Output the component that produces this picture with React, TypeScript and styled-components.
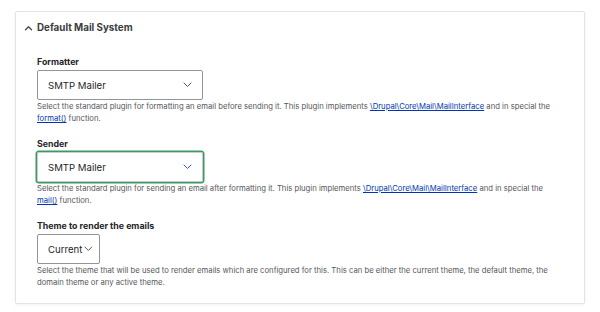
import React from 'react';
import styled, { createGlobalStyle } from 'styled-components';

const GlobalStyle = createGlobalStyle`
  html, body {
    margin: 0;
    padding: 0;
    background: #ffffff;
  }
  body {
    font-family: Inter, "Liberation Sans", Arial, sans-serif;
    color: #232429;
  }
`;

const Page = styled.div`
  padding: 11px 15px 10px 15px;
`;

const Card = styled.section`
  width: 570px;
  box-sizing: border-box;
  border: 1px solid #e3e4e8;
  border-radius: 2px;
  box-shadow: 0 1px 3px rgba(0, 0, 0, 0.06);
  background: #fff;
  padding-bottom: 14px;
`;

const Header = styled.div`
  display: flex;
  align-items: center;
  gap: 4px;
  padding: 9px 0 0 8px;
  height: 13px;
  font-size: 9.8px;
  font-weight: 700;
  color: #3b3c40;
  line-height: 13px;
`;

const Body = styled.div`
  padding: 22px 0 0 21px;
  display: flex;
  flex-direction: column;
`;

const Field = styled.div<{ $top?: number }>`
  display: flex;
  flex-direction: column;
  margin-top: ${p => p.$top ?? 0}px;
`;

const Label = styled.div`
  font-size: 8.8px;
  font-weight: 700;
  line-height: 12px;
  color: #232429;
  margin-bottom: 2px;
`;

const Select = styled.div<{ $width: number; $focused?: boolean; $tight?: boolean }>`
  box-sizing: border-box;
  width: ${p => p.$width}px;
  height: 30px;
  border: 1px solid ${p => (p.$focused ? '#c9cbd1' : '#92949b')};
  border-radius: 2px;
  display: flex;
  align-items: center;
  justify-content: ${p => (p.$tight ? 'flex-start' : 'space-between')};
  gap: 2px;
  padding: 0 ${p => (p.$tight ? 6 : 10)}px 0 10px;
  font-size: 9.6px;
  color: #232429;
  box-shadow: ${p => (p.$focused ? '0 0 0 1.5px #3d9a5f' : 'none')};
`;

const Description = styled.p`
  margin: 1px 0 0 0;
  font-size: 7.7px;
  line-height: 12px;
  color: #55565b;
  width: 525px;
`;

const Link = styled.a`
  color: #0036b1;
  text-decoration: underline;
`;

const Chevron = ({ color = '#55565b', up = false }: { color?: string; up?: boolean }) => (
  <svg width="9" height="6" viewBox="0 0 9 6" fill="none">
    <path
      d={up ? 'M1.5 4.8 L4.5 1.8 L7.5 4.8' : 'M1 1 L4.5 4.5 L8 1'}
      stroke={color}
      strokeWidth={up ? 1.3 : 1}
      strokeLinecap="round"
      strokeLinejoin="round"
    />
  </svg>
);

export default function App() {
  return (
    <Page>
      <GlobalStyle />
      <Card>
        <Header>
          <Chevron up color="#4a4b50" />
          Default Mail System
        </Header>
        <Body>
          <Field>
            <Label>Formatter</Label>
            <Select $width={166}>
              SMTP Mailer
              <Chevron />
            </Select>
            <Description>
              Select the standard plugin for formatting an email before sending it. This plugin implements{' '}
              <Link href="#">\Drupal\Core\Mail\MailInterface</Link> and in special the{' '}
              <Link href="#">format()</Link> function.
            </Description>
          </Field>
          <Field $top={13}>
            <Label>Sender</Label>
            <Select $width={166} $focused>
              SMTP Mailer
              <Chevron color="#2f55d4" />
            </Select>
            <Description>
              Select the standard plugin for sending an email after formatting it. This plugin implements{' '}
              <Link href="#">\Drupal\Core\Mail\MailInterface</Link> and in special the{' '}
              <Link href="#">mail()</Link> function.
            </Description>
          </Field>
          <Field $top={13}>
            <Label>Theme to render the emails</Label>
            <Select $width={63} $tight>
              Current
              <Chevron />
            </Select>
            <Description>
              Select the theme that will be used to render emails which are configured for this. This can be
              either the current theme, the default theme, the domain theme or any active theme.
            </Description>
          </Field>
        </Body>
      </Card>
    </Page>
  );
}
